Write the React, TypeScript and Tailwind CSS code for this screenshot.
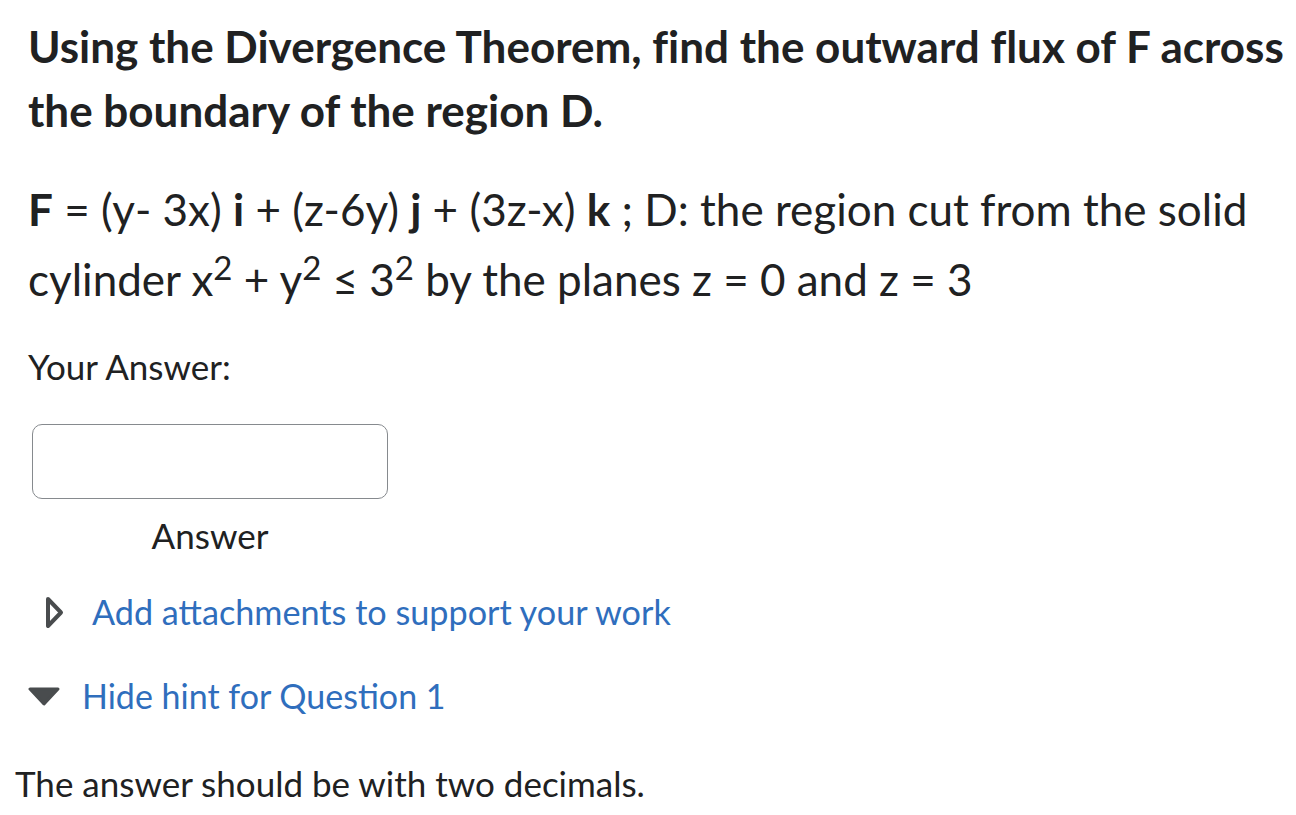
export default function App() {
  return (
    <div className="min-h-screen bg-white text-[#202122]" style={{ fontFamily: 'Lato, "Open Sans", sans-serif' }}>
      <div className="pl-[28px] pr-2 pt-[14px]">
        <h1 className="text-[44px] font-bold leading-[64px] [font-variant-ligatures:none]">
          Using the Divergence Theorem, find the outward flux of F across the boundary of the region D.
        </h1>
        <p className="mt-[32px] text-[44px] leading-[70px] [font-variant-ligatures:none]">
          <b>F</b> = (y- 3x) <b>i</b> + (z-6y) <b>j</b> + (3z-x) <b>k</b> ; D: the region cut from the solid cylinder x
          <sup>2</sup> + y<sup>2</sup> ≤ 3<sup>2</sup> by the planes z = 0 and z = 3
        </p>
        <div className="mt-[32px] text-[35px] leading-[40px]">Your Answer:</div>
        <div className="mt-[38px] ml-[4px] w-[356px]">
          <input
            type="text"
            className="block h-[75px] w-[356px] rounded-[10px] border border-[#868a8e] bg-white outline-none"
          />
          <div className="mt-[16px] text-center text-[35px] leading-[40px]">Answer</div>
        </div>
        <div className="mt-[37px] flex items-center gap-[28px] pl-[17px]">
          <svg width="19" height="33" viewBox="0 0 19 33">
            <path d="M3 3 L16 16.5 L3 30 Z" fill="none" stroke="#494c4e" strokeWidth="4" strokeLinejoin="round" />
          </svg>
          <a className="text-[34.2px] leading-[40px] text-[#2f6ebd]">Add attachments to support your work</a>
        </div>
        <div className="mt-[44px] flex items-center gap-[22px]">
          <svg width="32" height="19" viewBox="0 0 32 19">
            <path d="M2 2 L30 2 L16 17 Z" fill="#494c4e" stroke="#494c4e" strokeWidth="3" strokeLinejoin="round" />
          </svg>
          <a className="text-[34px] leading-[40px] text-[#2f6ebd]">Hide hint for Question 1</a>
        </div>
      </div>
      <div className="mt-[47px] pl-[15px] text-[35px] leading-[40px]">The answer should be with two decimals.</div>
    </div>
  );
}
